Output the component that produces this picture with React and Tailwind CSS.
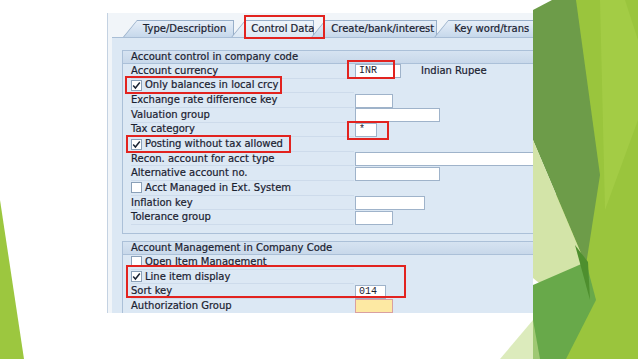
import React from "react";

const font = { fontFamily: '"DejaVu Sans", Verdana, sans-serif' };

function Input({ w, value, yellow = false }) {
  return (
    <div
      className={`h-[14px] border ${yellow ? "bg-[#fde9a3] border-[#d9a0a0]" : "bg-white border-[#9fb3ca]"} flex items-center pl-[3px] text-[10px] text-[#1c2230] leading-none shrink-0`}
      style={{ width: w, fontFamily: '"Liberation Mono", "Courier New", monospace' }}
    >
      {value}
    </div>
  );
}

function Check({ checked }) {
  return (
    <div className="w-[11px] h-[11px] bg-white border border-[#8aa0b8] flex items-center justify-center mr-[3px] shrink-0">
      {checked && (
        <svg width="9" height="9" viewBox="0 0 9 9">
          <path d="M1.2 4.6 L3.4 7 L7.8 1.5" fill="none" stroke="#1b2433" strokeWidth="1.5" />
        </svg>
      )}
    </div>
  );
}

function Row({ label, check, input, extra }) {
  return (
    <div className="h-[14.65px] flex items-center">
      <div className="w-[232px] h-full flex items-center pl-[8px] shrink-0">
        <div className="flex-1 h-full flex items-center border-b border-[#cddbeb] mr-[1px]">
          {check !== undefined && <Check checked={check} />}
          <span className="text-[10px] text-[#1a2130] leading-none whitespace-nowrap [-webkit-text-stroke:0.2px_#1a2130]">{label}</span>
        </div>
      </div>
      {input}
      {extra}
    </div>
  );
}

function Tab({ label, active }) {
  return (
    <div className="relative h-[17px] bg-[#98afc9] [clip-path:polygon(14px_0,100%_0,100%_100%,0_100%)] shrink-0">
      <div
        className={`absolute inset-x-[1px] top-[1px] bottom-0 ${active ? "bg-gradient-to-b from-[#eef4fa] to-[#dce8f4]" : "bg-gradient-to-b from-[#e6eef8] to-[#c6d8eb]"} [clip-path:polygon(13px_0,100%_0,100%_100%,0_100%)]`}
      />
      <div className="relative h-full flex items-center pl-[20px] pr-[8px] text-[10px] text-[#1a2130] whitespace-nowrap leading-none [-webkit-text-stroke:0.2px_#1a2130]">
        {label}
      </div>
    </div>
  );
}

function RedBox({ className }) {
  return <div className={`absolute border-[2px] border-[#e2231f] ${className}`} />;
}

function GroupHeader({ children }) {
  return (
    <div className="h-[13px] bg-gradient-to-b from-[#d6e3f1] to-[#c8d8ea] border-b border-[#abc0d8] flex items-center pl-[8px] text-[10px] text-[#1a2130] leading-none whitespace-nowrap [-webkit-text-stroke:0.2px_#1a2130]">
      {children}
    </div>
  );
}

export default function App() {
  return (
    <div className="relative w-[638px] h-[359px] bg-white overflow-hidden" style={font}>
      <svg className="absolute inset-0" width="638" height="359" viewBox="0 0 638 359">
        <polygon points="0,200 24,359 0,359" fill="#9cc73f" />
        <polygon points="575,0 638,0 638,359 540,359" fill="#9ac53d" />
        <polygon points="600,0 625,0 638,40 638,120 605,210" fill="#a6cf48" opacity="0.7" />
        <polygon points="552,0 576,0 600,175 586,265 533,140 533,10" fill="#6d9c49" />
        <polygon points="533,140 586,265 560,300 533,278" fill="#d3e4a8" />
        <polygon points="533,285 586,262 596,300 566,359 533,359" fill="#68a94a" />
        <polygon points="575,245 588,262 590,300" fill="#4e8f2e" />
        <polygon points="500,359 533,320 540,359" fill="#c5dd8f" opacity="0.6" />
      </svg>

      <div className="relative ml-[107px] mt-[13px] w-[426px] h-[300px] overflow-hidden bg-[#f1f5f9] border-l border-[#c4d2e2]">
        {/* tab strip */}
        <div className="h-[24px] flex items-end pl-[15px] gap-[1px]">
          <div className="w-[122px] flex"><div className="w-full"><Tab label="Type/Description" /></div></div>
          <div className="w-[83px] flex -ml-[4px]"><div className="w-full"><Tab label="Control Data" active /></div></div>
          <div className="w-[126px] flex -ml-[4px]"><div className="w-full"><Tab label="Create/bank/interest" /></div></div>
          <div className="w-[110px] flex -ml-[4px]"><div className="w-full"><Tab label="Key word/trans" /></div></div>
        </div>

        {/* panel */}
        <div className="ml-[4px] h-[276px] bg-[#dce8f4] border-t border-[#a9bed6] pt-[12px] pl-[10px]">
          {/* group 1 */}
          <div className="border border-[#abc0d8] border-r-0 pb-[8px]">
            <GroupHeader>Account control in company code</GroupHeader>
            <Row
              label="Account currency"
              input={<Input w={46} value="INR" />}
              extra={<span className="ml-[20px] text-[10px] text-[#1a2130] leading-none [-webkit-text-stroke:0.2px_#1a2130]">Indian Rupee</span>}
            />
            <Row label="Only balances in local crcy" check={true} />
            <Row label="Exchange rate difference key" input={<Input w={38} value="" />} />
            <Row label="Valuation group" input={<Input w={85} value="" />} />
            <Row label="Tax category" input={<Input w={22} value="*" />} />
            <Row label="Posting without tax allowed" check={true} />
            <Row label="Recon. account for acct type" input={<Input w={200} value="" />} />
            <Row label="Alternative account no." input={<Input w={85} value="" />} />
            <Row label="Acct Managed in Ext. System" check={false} />
            <Row label="Inflation key" input={<Input w={70} value="" />} />
            <Row label="Tolerance group" input={<Input w={38} value="" />} />
          </div>

          {/* group 2 */}
          <div className="mt-[7px] border border-[#abc0d8] border-r-0 border-b-0">
            <GroupHeader>Account Management in Company Code</GroupHeader>
            <div>
              <Row label="Open Item Management" check={false} />
              <Row label="Line item display" check={true} />
              <Row label="Sort key" input={<Input w={31} value="014" />} />
              <Row label="Authorization Group" input={<Input w={38} value="" yellow />} />
            </div>
          </div>
        </div>

        {/* annotations */}
        <RedBox className="left-[136px] top-[2px] w-[81px] h-[24px]" />
        <RedBox className="left-[239px] top-[47px] w-[48px] h-[19px]" />
        <RedBox className="left-[17px] top-[63px] w-[157px] h-[18px]" />
        <RedBox className="left-[239px] top-[108px] w-[42px] h-[19px]" />
        <RedBox className="left-[18px] top-[122px] w-[165px] h-[18px]" />
        <RedBox className="left-[18px] top-[252px] w-[280px] h-[33px]" />
      </div>
    </div>
  );
}
